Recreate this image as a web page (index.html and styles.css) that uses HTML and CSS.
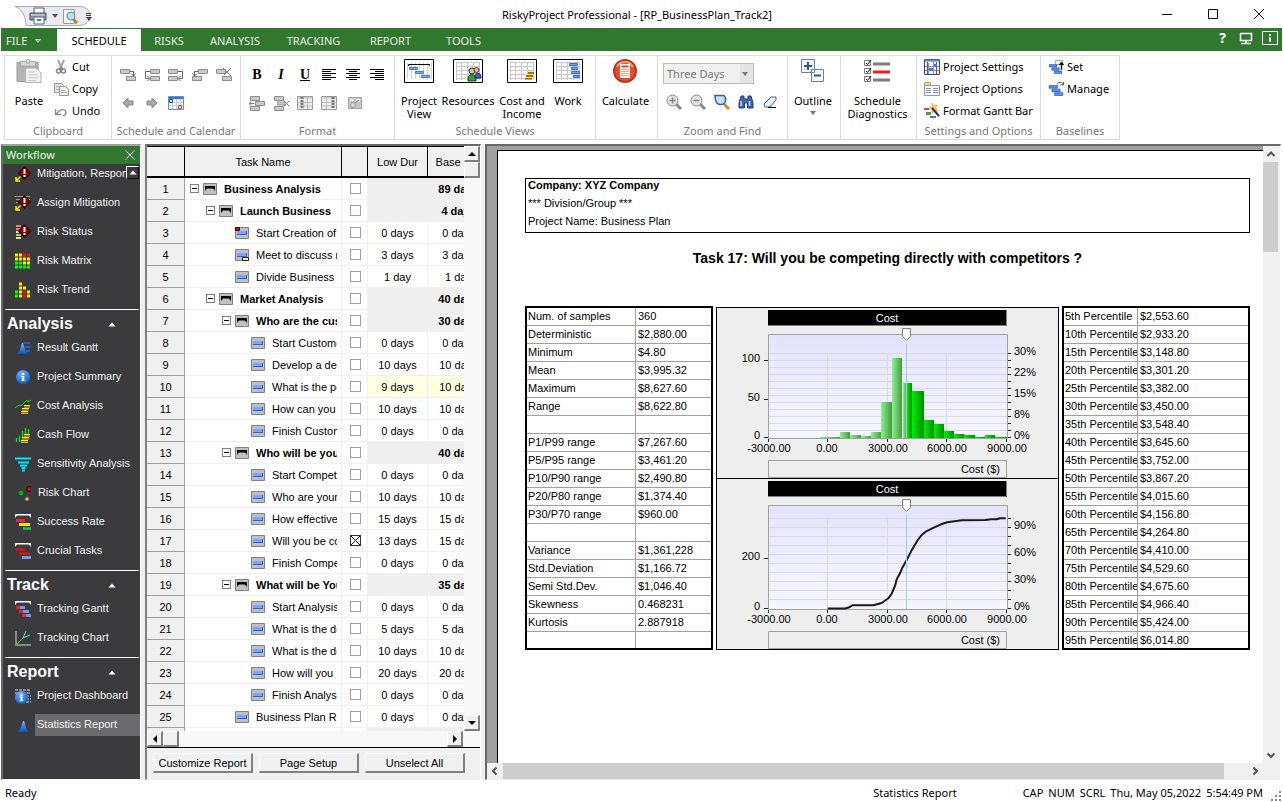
FILE: index.html
```html
<!DOCTYPE html>
<html lang="en">
<head>
<meta charset="utf-8">
<title>RiskyProject Professional - [RP_BusinessPlan_Track2]</title>
<link rel="stylesheet" href="styles.css">
</head>
<body>
<svg class="sprite" aria-hidden="true">
  <defs>
    <linearGradient id="g-blue" x1="0" y1="0" x2="0" y2="1"><stop offset="0" stop-color="#7ab8f5"/><stop offset="1" stop-color="#0b4fc0"/></linearGradient>
    <radialGradient id="g-info" cx=".4" cy=".25" r=".8"><stop offset="0" stop-color="#6fb6ff"/><stop offset="1" stop-color="#0a55c8"/></radialGradient>
    <linearGradient id="g-plot" x1="0" y1="0" x2="0" y2="1"><stop offset="0" stop-color="#e3e3ff"/><stop offset="1" stop-color="#f6f6ff"/></linearGradient>
    <linearGradient id="g-light"><stop offset="0" stop-color="#92f092"/><stop offset="1" stop-color="#3f9c3f"/></linearGradient>
    <linearGradient id="g-dark"><stop offset="0" stop-color="#00f000"/><stop offset="1" stop-color="#008c00"/></linearGradient>
  </defs>
  <symbol id="i-sum" viewBox="0 0 14 12"><path d="M.5.500h13v11H.5z" fill="#c0c0c0" stroke="#808080"/><path d="M2 8V3h10v5l-2-2.500H4z"/></symbol>
  <symbol id="i-task" viewBox="0 0 14 12"><path d="M.5.500h13v11H.5z" fill="#c0c0c0" stroke="#808080"/><path d="M2 4h10v4H2z" fill="#2b62d9"/><path d="M2 4h9v3H2z" fill="#7ba6ff"/></symbol>
  <symbol id="i-start" viewBox="0 0 14 12"><use href="#i-task"/><path d="M.5.500h4v3h-4z" fill="#e00000" stroke="#400"/></symbol>
  <symbol id="i-note" viewBox="0 0 14 12"><use href="#i-task"/><path d="M7.500 8.500h6v3h-6z" fill="#fff0a0" stroke="#222"/></symbol>
  <symbol id="i-diamond" viewBox="0 0 16 16"><path d="M9.500.700 15.800 7l-6.300 6.300L3.200 7z" fill="#8a0000" stroke="#000"/><path d="M8.500 3h2v5h-2zm0 6h2v2h-2z" fill="#fff"/></symbol>
  <symbol id="i-arrow" viewBox="0 0 16 16"><path d="M5.500 10.500 1.500 14.500M1 11v4h4" fill="none" stroke="#ffe800" stroke-width="1.500"/></symbol>
  <symbol id="i-coins" viewBox="0 0 10 10"><path d="M0 7h7v3H0zM1 4h7v3H1zM3 1h6v3H3z" fill="#a87408"/><path d="M0 7h7v1H0zM1 4h7v1H1zM3 1h6v1H3zM0 9h7v.5H0z" fill="#ffe878"/></symbol>
  <symbol id="i-info" viewBox="0 0 16 16"><circle cx="8" cy="8" r="7" fill="url(#g-info)"/><path d="M7 4h2.200v2H7zM6 7h3.200v4H10v1H6v-1h1V8H6z" fill="#fff"/></symbol>
  <symbol id="i-peak" viewBox="0 0 16 16"><path d="M1 14c4-1 4-6 6-11h1c2 5 2 10 6 11z" fill="url(#g-blue)"/></symbol>
  <symbol id="i-up" viewBox="0 0 8 5"><path d="M4 .5 7.500 4.500h-7z" fill="#fff"/></symbol>
  <symbol id="i-bars" viewBox="0 0 16 12"><g stroke="#003c9c" stroke-width=".6" fill="#5b8ff0"><path d="M.5.500h9v3h-9zM3.500 4.500h9v3h-9zM6.500 8.500h9v3h-9z"/></g></symbol>
  <symbol id="i-bracket" viewBox="0 0 16 5"><path d="M0 4V0h16v4l-2-2.500H2z" fill="#fff"/></symbol>
  <symbol id="i-gridbox" viewBox="0 0 30 24"><path d="M.5.500h29v23H.5z" fill="#fff" stroke="#000"/><path d="M3 3.500h24M3 7.500h24M3 11.500h24M3 15.500h24M3 19.500h24M3.500 3v18M8.500 3v18M14.500 3v18M20.500 3v18M26.500 3v18" stroke="#c8c8c8" fill="none"/></symbol>
  <symbol id="i-boxes" viewBox="0 0 10 5"><path d="M.5.500h9v4h-9z" fill="#c9c9c9" stroke="#8e8e8e"/></symbol>
  <symbol id="i-left" viewBox="0 0 16 16"><path d="M3 8l5-5v3h5v4H8v3z" fill="#a8a8a8" stroke="#888"/></symbol>
  <symbol id="i-lens" viewBox="0 0 16 16"><path d="m10 10 5 5" stroke="#888" stroke-width="3"/><circle cx="6.500" cy="6.500" r="5.500" fill="#e2e2e2" stroke="#8c8c8c"/></symbol>
</svg>

<header class="titlebar">
  <svg class="quick" viewBox="2 0 78 24"><path d="M2 4.500h64c8 0 11 5 11 9s-3 10-11 10H13C13 14 8 6 2 4.500z" fill="#e9ebee" stroke="#a8abb0"/>
    <path d="M21 6h10v6H21z" fill="#fff" stroke="#556"/><path d="M17 11h16v7H17z" fill="#8b95a3" stroke="#4c5663"/><path d="M18 13h14" stroke="#dfe6ee"/><path d="M21 15h10v7H21z" fill="#f5f9ff" stroke="#667"/><path d="M24 17h4v2h-4z" fill="#2c83d4"/>
    <path d="M39 12h6l-3 4z" fill="#555"/>
    <path d="M50.500 7.500h11v14h-11z" fill="#fff" stroke="#999"/><path d="m60 17 4 4" stroke="#d07a18" stroke-width="3"/><circle cx="58" cy="14" r="4" fill="#bcdcf5" stroke="#5e87ab"/>
    <path d="M73 11.500h5M73 13.500h5" stroke="#444"/><path d="M73 15h6l-3 4z" fill="#444"/></svg>
  <h1>RiskyProject Professional - [RP_BusinessPlan_Track2]</h1>
  <div class="winbtns">
    <button type="button" aria-label="Minimize"><svg viewBox="0 0 12 12"><path d="M1 6.500h10" stroke="#000"/></svg></button>
    <button type="button" aria-label="Maximize"><svg viewBox="0 0 12 12"><path d="M1.500 1.500h9v9h-9z" fill="none" stroke="#000"/></svg></button>
    <button type="button" aria-label="Close"><svg viewBox="0 0 12 12"><path d="m1 1 10 10M11 1 1 11" stroke="#000"/></svg></button>
  </div>
</header>

<nav class="menubar">
  <button type="button" class="file">FILE <svg viewBox="0 0 6 4" class="tri"><path d="M.5.500h5L3 3.500z" fill="#7fa67c" stroke="#dfeadd" stroke-width=".7"/></svg></button>
  <button type="button" class="w84 on">SCHEDULE</button>
  <button type="button" class="w56">RISKS</button>
  <button type="button" class="w76">ANALYSIS</button>
  <button type="button" class="w80">TRACKING</button>
  <button type="button" class="w72">REPORT</button>
  <button type="button" class="w72">TOOLS</button>
  <div class="menuicons">
    <button type="button" class="help">?</button>
    <button type="button" aria-label="Screen"><svg viewBox="0 0 16 16"><path d="M2.500 3.500h11v7h-11zM8 11v2M3 13.500h10" fill="none" stroke="#fff" stroke-width="1.500"/></svg></button>
    <button type="button" aria-label="About"><svg viewBox="0 0 16 16"><path d="M.5 1.500h15v13H.5z" fill="none" stroke="#fff"/><path d="M7 4h2v2H7zm0 3h2v5H7z" fill="#fff"/></svg></button>
  </div>
</nav>

<section class="ribbon">
  <div class="group g107">
    <div class="body">
      <button type="button" class="big w48"><svg viewBox="0 0 26 25"><path d="M.5 3.500h22v20H.5z" fill="#b5b5b5" stroke="#9a9a9a"/><path d="M4 2.500h16v5H4z" fill="#d8d8d8" stroke="#a0a0a0"/><circle cx="12" cy="2.500" r="2" fill="#eee" stroke="#999"/><path d="M9.500 9.500h11l5 5v10h-16z" fill="#f2f2f2" stroke="#adadad"/><path d="M12 13.500h7M12 16.500h10M12 19.500h10M12 22.500h8" stroke="#c4c4c4"/></svg>Paste</button>
      <div class="list">
        <button type="button"><svg viewBox="0 0 16 16"><path d="m5 1 3 7M11 1 8 8" stroke="#a8a8a8" stroke-width="2"/><path d="m8 8-2 3M8 8l2 3" stroke="#888" stroke-width="2"/><circle cx="5.500" cy="12" r="2" fill="none" stroke="#888" stroke-width="1.500"/><circle cx="10.500" cy="12" r="2" fill="none" stroke="#888" stroke-width="1.500"/></svg>Cut</button>
        <button type="button"><svg viewBox="0 0 16 16"><path d="M1.500 2.500h7l2 2v7h-9z" fill="#e6e6e6" stroke="#999"/><path d="M6.500 5.500h6l3 3v6h-9z" fill="#efefef" stroke="#999"/><path d="M3 5.500h4M3 8.500h3M8 9.500h4M8 11.500h6" stroke="#aaa"/></svg>Copy</button>
        <button type="button"><svg viewBox="0 0 16 16"><path d="M2.500 6v5.500H8M3 11l4-3.500c3-2 6-.5 6 2 0 2-1.500 3-3 3.500" fill="none" stroke="#888" stroke-width="1.300"/></svg>Undo</button>
      </div>
    </div>
    <div class="caption">Clipboard</div>
  </div>

  <div class="group g129">
    <div class="tools">
      <div>
        <button type="button" aria-label="Link"><svg viewBox="0 0 16 16"><use href="#i-boxes" x="0" y="2" width="10" height="5"/><use href="#i-boxes" x="6" y="9" width="10" height="5"/><path d="M10 4.500h3.500V9M11 6.500l2.500 2.500 2-2.500" fill="none" stroke="#666"/></svg></button>
        <button type="button" aria-label="Link start"><svg viewBox="0 0 16 16"><use href="#i-boxes" x="6" y="2" width="10" height="5"/><use href="#i-boxes" x="6" y="9" width="10" height="5"/><path d="M6 4.500H1.500v7H5M3.500 9 6 11.500 3.500 14" fill="none" stroke="#666"/></svg></button>
        <button type="button" aria-label="Link finish"><svg viewBox="0 0 16 16"><use href="#i-boxes" x="0" y="2" width="10" height="5"/><use href="#i-boxes" x="0" y="9" width="10" height="5"/><path d="M10 4.500h4.500v7H11M12.500 9 10 11.500l2.500 2.500" fill="none" stroke="#666"/></svg></button>
        <button type="button" aria-label="Link back"><svg viewBox="0 0 16 16"><use href="#i-boxes" x="6" y="2" width="10" height="5"/><use href="#i-boxes" x="0" y="9" width="10" height="5"/><path d="M6 4.500H2.500V9M.5 6.500 2.500 9 5 6.500" fill="none" stroke="#666"/></svg></button>
        <button type="button" aria-label="Unlink"><svg viewBox="0 0 16 16"><use href="#i-boxes" x="0" y="2" width="10" height="5"/><use href="#i-boxes" x="6" y="9" width="10" height="5"/><path d="m7 1 8 8M15 1 8 8" stroke="#777"/></svg></button>
      </div>
      <div>
        <button type="button" aria-label="Outdent"><svg viewBox="0 0 16 16"><use href="#i-left"/></svg></button>
        <button type="button" aria-label="Indent"><svg viewBox="0 0 16 16"><use href="#i-left" transform="matrix(-1 0 0 1 16 0)"/></svg></button>
        <button type="button" aria-label="Calendar"><svg viewBox="0 0 16 16"><path d="M.5 1.500h15v13H.5z" fill="#fff" stroke="#5b8cd6"/><path d="M1 2h14v2H1z" fill="#3a72cc"/><path d="M1 7.500h14M1 10.500h14M4.500 4v10M8.500 4v10M12.500 4v10" stroke="#b9cdec"/><path d="M1.500 4.500h3v3h-3z" fill="#fff" stroke="#1c4f9e"/><path d="M10.500 10.500h3v3h-3z" fill="#fbd6c4" stroke="#e04a10"/></svg></button>
      </div>
    </div>
    <div class="caption">Schedule and Calendar</div>
  </div>

  <div class="group g154">
    <div class="tools">
      <div>
        <button type="button" class="ser">B</button>
        <button type="button" class="ser it">I</button>
        <button type="button" class="ser un">U</button>
        <button type="button" aria-label="Align left"><svg viewBox="0 0 16 16"><path d="M1 2.500h14M1 4.500h9M1 6.500h14M1 8.500h9M1 10.500h14M1 12.500h9" stroke="#000"/></svg></button>
        <button type="button" aria-label="Center"><svg viewBox="0 0 16 16"><path d="M1 2.500h14M4 4.500h8M1 6.500h14M4 8.500h8M1 10.500h14M4 12.500h8" stroke="#000"/></svg></button>
        <button type="button" aria-label="Align right"><svg viewBox="0 0 16 16"><path d="M1 2.500h14M6 4.500h9M1 6.500h14M6 8.500h9M1 10.500h14M6 12.500h9" stroke="#000"/></svg></button>
      </div>
      <div>
        <button type="button" aria-label="Insert row"><svg viewBox="0 0 16 16"><use href="#i-boxes" x="1" y="1" width="10" height="5"/><use href="#i-boxes" x="6" y="6" width="10" height="5"/><use href="#i-boxes" x="1" y="11" width="10" height="5"/><path d="M0 8.500h5M2.500 6 0 8.500 2.500 11" fill="none" stroke="#777"/></svg></button>
        <button type="button" aria-label="Delete row"><svg viewBox="0 0 16 16"><use href="#i-boxes" x="1" y="1" width="10" height="5"/><use href="#i-boxes" x="4" y="6" width="8" height="5"/><use href="#i-boxes" x="1" y="11" width="10" height="5"/><path d="m11 6 5 5M16 6l-5 5" stroke="#777"/></svg></button>
        <button type="button" aria-label="Insert column"><svg viewBox="0 0 16 16"><path d="M.5 1.500h15v13H.5z" fill="#ededed" stroke="#999"/><path d="M1 3h14M1 7.500h14M1 11h14M10.500 2v12" stroke="#bbb"/><path d="M5 2v12" stroke="#777" stroke-width="3" stroke-dasharray="2 1"/></svg></button>
        <button type="button" aria-label="Delete column"><svg viewBox="0 0 16 16"><path d="M.5 1.500h15v13H.5z" fill="#ededed" stroke="#999"/><path d="M1 3h14M1 7.500h14M1 11h14M5.500 2v12" stroke="#bbb"/><path d="M12 2v12" stroke="#777" stroke-width="3" stroke-dasharray="2 1"/></svg></button>
        <button type="button" class="push" aria-label="Format"><svg viewBox="0 0 16 16"><path d="M1.500 2.500h13v11h-13z" fill="#c6c6c6" stroke="#a5a5a5"/><path d="M3 4h4v2H3zm6 0h4v3H9z" fill="#eee"/><circle cx="6" cy="10" r="2.500" fill="#ddd" stroke="#999"/><path d="m8 8 4-3" stroke="#888"/></svg></button>
      </div>
    </div>
    <div class="caption">Format</div>
  </div>

  <div class="group g201">
    <div class="body tight">
      <button type="button" class="big w46"><svg viewBox="0 0 30 24"><path d="M.5.500h29v23H.5z" fill="#fff" stroke="#000"/><path d="M3.500 4v16M7.500 4v16M11.500 4v16M15.500 4v16M19.500 4v16M23.500 4v16M27.500 4v16" stroke="#d0d0d0"/><path d="M4.500 7V5.500h21V7" fill="none" stroke="#000"/><path d="M5.500 8.500h8v2h-8zM11.500 12.500h8v2h-8zM17.500 16.500h8v2h-8z" fill="#7ba6ff" stroke="#4a78d8"/></svg>Project<br>View</button>
      <button type="button" class="big w52"><svg viewBox="0 0 30 24"><use href="#i-gridbox"/><circle cx="19" cy="12" r="3" fill="#d9c29a" stroke="#432"/><path d="M15 20c0-6 8-6 8 0v2h-8z" fill="#3f9a35" stroke="#153"/><circle cx="23.500" cy="11" r="2.500" fill="#d9c29a" stroke="#432"/><path d="M22 18c0-5 6-5 6 0v1h-6z" fill="#3c63c8" stroke="#124"/></svg>Resources</button>
      <button type="button" class="big w56"><svg viewBox="0 0 30 24"><use href="#i-gridbox"/><use href="#i-coins" x="18" y="11" width="10" height="10"/></svg>Cost and<br>Income</button>
      <button type="button" class="big w36"><svg viewBox="0 0 30 24"><use href="#i-gridbox"/><path d="M16.500 4.500h8v2h-8zM18.500 8.500h6v2h-6zM18.500 12.500h8v2h-8zM20.500 16.500h6v2h-6z" fill="#6ea2f5" stroke="#3a70d0"/></svg>Work</button>
    </div>
    <div class="caption">Schedule Views</div>
  </div>

  <div class="group g62">
    <div class="body mid">
      <button type="button" class="big"><svg viewBox="0 0 24 24"><circle cx="12" cy="12" r="11" fill="#ee4a26" stroke="#b83820" stroke-width="2"/><path d="M4 8a9 9 0 0 1 16 0" fill="none" stroke="#ff9d80" stroke-width="2"/><path d="M7 5h10v14H7z" fill="#fff"/><path d="M8.500 6.500h7v2h-7z" fill="#e8451e"/><path d="M8.500 10.500h7M8.500 12.500h7M8.500 14.500h7M8.500 16.500h7" stroke="#e8451e" stroke-dasharray="1 1"/></svg>Calculate</button>
    </div>
    <div class="caption"></div>
  </div>

  <div class="group g130">
    <div class="tools zoom">
      <select aria-label="Zoom scale" disabled><option>Three Days</option></select>
      <div>
        <button type="button" aria-label="Zoom in"><svg viewBox="0 0 16 16"><use href="#i-lens"/><path d="M6.500 3.500v6M3.500 6.500h6" stroke="#888" stroke-width="1.500"/></svg></button>
        <button type="button" aria-label="Zoom out"><svg viewBox="0 0 16 16"><use href="#i-lens"/><path d="M3.500 6.500h6" stroke="#888" stroke-width="1.500"/></svg></button>
        <button type="button" aria-label="Zoom to fit"><svg viewBox="0 0 16 16"><path d="m10 10 5 5" stroke="#c89020" stroke-width="3"/><path d="M1 1.500h9c3 3 2 9-3.500 9C3 10.500 1 7 1 1.500z" fill="#c2e2f8" stroke="#38639c" stroke-width="1.500"/></svg></button>
        <button type="button" aria-label="Find"><svg viewBox="0 0 16 16"><path d="M3 2h3v3h4V2h3l2 7v5h-5.500V9h-3v5H1V9z" fill="#3b65b5" stroke="#20407c"/><path d="M3 7v5M11.500 7v5" stroke="#c9dcf8" stroke-width="1.500"/></svg></button>
        <button type="button" aria-label="Clear"><svg viewBox="0 0 16 16"><path d="m2 10 7-7h5v3l-6 7H3z" fill="#eaf0fa" stroke="#4a64a0"/><path d="M6 13.500h8" stroke="#000"/></svg></button>
      </div>
    </div>
    <div class="caption">Zoom and Find</div>
  </div>

  <div class="group g53">
    <div class="body mid">
      <button type="button" class="big"><svg viewBox="0 0 24 24"><path d="M.5.500h13v13H.5zM10.500 10.500h12v12h-12z" fill="#f3f7fc" stroke="#6e7f92"/><path d="M7 3v8M3 7h8M13 16.500h7" stroke="#35567e" stroke-width="2"/></svg>Outline<svg viewBox="0 0 6 4" class="tri"><path d="M0 0h6L3 4z" fill="#777"/></svg></button>
    </div>
    <div class="caption"></div>
  </div>

  <div class="group g76">
    <div class="body mid">
      <button type="button" class="big"><svg viewBox="0 0 26 24"><path d="M.5 1.500h6v5h-6zM.5 9.500h6v5h-6zM.5 17.500h6v5h-6z" fill="#fff" stroke="#777"/><path d="m2 4 1.500 1.500L7 1M2 12l1.500 1.500L7 9M2 20l1.500 1.500L7 17" fill="none" stroke="#111"/><path d="M9 5h17M9 21h17" stroke="#7d7d7d" stroke-width="3"/><path d="M9 13h17" stroke="#ee1c24" stroke-width="3"/></svg>Schedule<br>Diagnostics</button>
    </div>
    <div class="caption"></div>
  </div>

  <div class="group g124">
    <div class="body side">
      <div class="list">
        <button type="button"><svg viewBox="0 0 16 16"><path d="M.5.500h15v15H.5z" fill="#eef4ff" stroke="#274a86"/><path d="M1 1.500h14" stroke="#5f86c4" stroke-width="2"/><path d="M1 7.500h14M1 11.500h14M4.500 4v11M9.500 1v14" stroke="#7b96c8"/><path d="M3.500 3v12M12.500 3v12" stroke="#e02020"/><path d="M5 9h4v3H5zM10 5h3v3h-3z" fill="#4377d8"/></svg>Project Settings</button>
        <button type="button"><svg viewBox="0 0 16 16"><path d="M.5 4.500h15v10H.5z" fill="#fafafa" stroke="#8d99a8"/><path d="M.5 4V1.500h6V4" fill="#f6d88a" stroke="#c9a24d"/><path d="M2 7.500h5M2 9.500h5M2 11.500h5M9 7.500h5M9 9.500h5M9 11.500h5" stroke="#7a8fd0"/></svg>Project Options</button>
        <button type="button"><svg viewBox="0 0 16 16"><path d="M0 5h5v2H0z" fill="#d8492b"/><path d="M2 9h5v3H2z" fill="#4f9a44"/><path d="M6 13h6v2H6z" fill="#3f75d8"/><path d="m8 0 1.500 3L13 2l-1.500 3L14 8l-3.500-.5L8 10V6.500L5 5l3-1z" fill="#ffd34e" stroke="#d99a10" stroke-width=".6"/><path d="m8 5 7 8" stroke="#203a70" stroke-width="2"/></svg>Format Gantt Bar</button>
      </div>
    </div>
    <div class="caption">Settings and Options</div>
  </div>

  <div class="group g79">
    <div class="body side">
      <div class="list">
        <button type="button"><svg viewBox="0 0 16 16"><path d="M7.500 1.500h7v4h-7z" fill="#eef5ec" stroke="#9cb59a"/><use href="#i-bars" x="0" y="5" width="15" height="10"/><path d="M13.500 11V4M11.500 6l2-2.500 2 2.500" fill="none" stroke="#000" stroke-width="1.300"/></svg>Set</button>
        <button type="button"><svg viewBox="0 0 16 16"><use href="#i-bars" x="0" y="4" width="16" height="11"/><path d="M9 3.500c1-3 5-3 6 0M15.500 1v3h-3" fill="none" stroke="#557"/></svg>Manage</button>
      </div>
    </div>
    <div class="caption">Baselines</div>
  </div>
</section>

<main class="work">
  <aside class="flow">
    <div class="flowhead"><h2>Workflow</h2><button type="button" aria-label="Close"><svg viewBox="0 0 10 10"><path d="m.5.500 9 9M9.500.500l-9 9" stroke="#fff"/></svg></button></div>
    <div class="flowbody">
      <ul>
        <li><a href="#"><svg viewBox="0 0 16 16"><use href="#i-diamond"/><use href="#i-arrow"/></svg><span>Mitigation, Respons</span></a></li>
        <li><a href="#"><svg viewBox="0 0 16 16"><path d="M0 1.500h15M1 4.500h14M1 7.500h13" stroke="#999"/><use href="#i-diamond"/><use href="#i-arrow"/></svg><span>Assign Mitigation</span></a></li>
        <li><a href="#"><svg viewBox="0 0 16 16"><path d="M1 2h5M1 5h5" stroke="#f08080" stroke-width="2"/><path d="M1 8h5M1 14h5" stroke="#ffe87a" stroke-width="2"/><path d="M1 11h5" stroke="#7be08a" stroke-width="2"/><use href="#i-diamond"/></svg><span>Risk Status</span></a></li>
        <li><a href="#"><svg viewBox="0 0 16 16"><path d="M0 2h3M4 2h3M0 6h3M4 6h3M8 6h3M12 6h3M8 10h3M12 10h3" stroke="#ffe800" stroke-width="3"/><path d="M8 2h3M12 2h3" stroke="#e81818" stroke-width="3"/><path d="M0 10h3M4 10h3M0 14h15" stroke="#0f0" stroke-width="3" stroke-dasharray="3 1"/></svg><span>Risk Matrix</span></a></li>
        <li><a href="#"><svg viewBox="0 0 16 16"><path d="M4 2h3M4 6h3M8 6h3M4 10h3M12 10h3" stroke="#ffe800" stroke-width="3"/><path d="M8 10h3M8 14h3" stroke="#e81818" stroke-width="3"/><path d="M0 10h3M0 14h3" stroke="#0f0" stroke-width="3"/><path d="M4 14h3M12 14h3" stroke="#ffe800" stroke-width="3"/></svg><span>Risk Trend</span></a></li>
      </ul>
      <h3>Analysis<svg viewBox="0 0 8 5"><use href="#i-up"/></svg></h3>
      <ul>
        <li><a href="#"><svg viewBox="0 0 16 16"><path d="M8 2h7v2H9zM10 6h6v2h-6zM11 10h4v2h-4z" fill="#2c5cc0"/><use href="#i-peak"/></svg><span>Result Gantt</span></a></li>
        <li><a href="#"><svg viewBox="0 0 16 16"><use href="#i-info"/></svg><span>Project Summary</span></a></li>
        <li><a href="#"><svg viewBox="0 0 16 16"><path d="m0 10 4-3 2 1 6-6 1 2 3-2" fill="none" stroke="#0e0"/><use href="#i-coins" x="6" y="6" width="10" height="10"/></svg><span>Cost Analysis</span></a></li>
        <li><a href="#"><svg viewBox="0 0 16 16"><path d="M1.500 15v-4M4.500 15V9M7.500 15V4M10.500 8V1M13.500 8V2" stroke="#0e0" stroke-width="1.200"/><use href="#i-coins" x="6" y="6" width="10" height="10"/></svg><span>Cash Flow</span></a></li>
        <li><a href="#"><svg viewBox="0 0 16 16"><path d="M0 2.500h16M3 6.500h11M5 9.500h7M6.500 12h4M7 14.500h3" stroke="#00e5ff" stroke-width="2.200"/></svg><span>Sensitivity Analysis</span></a></li>
        <li><a href="#"><svg viewBox="0 0 16 16"><circle cx="6" cy="8" r="3" fill="#16a516" stroke="#052"/><circle cx="14" cy="4" r="2.500" fill="#c01010" stroke="#400"/><circle cx="12" cy="14" r="2" fill="#e0d060" stroke="#663"/></svg><span>&hairsp;Risk Chart</span></a></li>
        <li><a href="#"><svg viewBox="0 0 16 16"><use href="#i-bracket" width="16" height="5"/><path d="M1 6.500h9" stroke="#f02040" stroke-width="3"/><path d="M4 10.500h11" stroke="#f8e000" stroke-width="3"/><path d="M8 14.500h8" stroke="#10d040" stroke-width="2.500"/></svg><span>Success Rate</span></a></li>
        <li><a href="#"><svg viewBox="0 0 16 16"><use href="#i-bracket" width="16" height="5"/><path d="M1 6.500h9M4 10.500h11" stroke="#e01010" stroke-width="2.500"/><path d="M7 14.500h9" stroke="#6a9af5" stroke-width="3"/></svg><span>Crucial Tasks</span></a></li>
      </ul>
      <h3>Track<svg viewBox="0 0 8 5"><use href="#i-up"/></svg></h3>
      <ul>
        <li><a href="#"><svg viewBox="0 0 16 16"><use href="#i-bracket" width="16" height="5"/><path d="M1 6.500h4M4 10.500h4M7 14.500h4" stroke="#f02020" stroke-width="3"/><path d="M5 6.500h5M8 10.500h6M11 14.500h5" stroke="#6a9af5" stroke-width="3"/></svg><span>Tracking Gantt</span></a></li>
        <li><a href="#"><svg viewBox="0 0 16 16"><path d="M1 1v14h15" fill="none" stroke="#888" stroke-width="2"/><path d="m2 14 6-6 3-7M8 8l7-3" fill="none" stroke="#5ce0e8"/><path d="m2 14 5-5" stroke="#1c1"/></svg><span>Tracking Chart</span></a></li>
      </ul>
      <h3>Report<svg viewBox="0 0 8 5"><use href="#i-up"/></svg></h3>
      <ul>
        <li><a href="#"><svg viewBox="0 0 16 16"><path d="M0 2h16M0 5h16M11 8h5M11 11h5M11 14h5" stroke="#8a8a8a" stroke-width="2" stroke-dasharray="3 1"/><use href="#i-info" x="-1" y="2" width="15" height="15"/></svg><span>Project Dashboard</span></a></li>
        <li><a href="#" class="sel"><svg viewBox="0 0 16 16"><use href="#i-peak" x="1" y="1"/></svg><span>Statistics Report</span></a></li>
      </ul>
      <button type="button" class="scrollup" aria-label="Scroll up"><svg viewBox="0 0 8 5"><use href="#i-up"/></svg></button>
    </div>
  </aside>

  <section class="gridpane">
    <div class="gridtop">
      <div class="gridclip">
        <table class="tasks">
          <colgroup><col class="c1"><col class="c2"><col class="c3"><col class="c4"><col class="c5"></colgroup>
          <thead><tr><th></th><th>Task Name</th><th></th><th>Low Dur</th><th>Base Dur</th></tr></thead>
          <tbody>
            <tr class="s l0"><th>1</th><td><div><button type="button" aria-label="Collapse"></button><svg><use href="#i-sum"/></svg><span>Business Analysis</span></div></td><td><input type="checkbox" aria-label="Task 1"></td><td></td><td>89 days</td></tr>
            <tr class="s l1"><th>2</th><td><div><button type="button" aria-label="Collapse"></button><svg><use href="#i-sum"/></svg><span>Launch Business</span></div></td><td><input type="checkbox" aria-label="Task 2"></td><td></td><td>4 days</td></tr>
            <tr class="l2"><th>3</th><td><div><svg><use href="#i-start"/></svg><span>Start Creation of</span></div></td><td><input type="checkbox" aria-label="Task 3"></td><td>0 days</td><td>0 days</td></tr>
            <tr class="l2"><th>4</th><td><div><svg><use href="#i-note"/></svg><span>Meet to discuss roles</span></div></td><td><input type="checkbox" aria-label="Task 4"></td><td>3 days</td><td>3 days</td></tr>
            <tr class="l2"><th>5</th><td><div><svg><use href="#i-task"/></svg><span>Divide Business Plan</span></div></td><td><input type="checkbox" aria-label="Task 5"></td><td>1 day</td><td>1 day</td></tr>
            <tr class="s l1"><th>6</th><td><div><button type="button" aria-label="Collapse"></button><svg><use href="#i-sum"/></svg><span>Market Analysis</span></div></td><td><input type="checkbox" aria-label="Task 6"></td><td></td><td>40 days</td></tr>
            <tr class="s l2"><th>7</th><td><div><button type="button" aria-label="Collapse"></button><svg><use href="#i-sum"/></svg><span>Who are the customers</span></div></td><td><input type="checkbox" aria-label="Task 7"></td><td></td><td>30 days</td></tr>
            <tr class="l3"><th>8</th><td><div><svg><use href="#i-task"/></svg><span>Start Customer</span></div></td><td><input type="checkbox" aria-label="Task 8"></td><td>0 days</td><td>0 days</td></tr>
            <tr class="l3"><th>9</th><td><div><svg><use href="#i-task"/></svg><span>Develop a description</span></div></td><td><input type="checkbox" aria-label="Task 9"></td><td>10 days</td><td>10 days</td></tr>
            <tr class="l3 hot"><th>10</th><td><div><svg><use href="#i-task"/></svg><span>What is the potential</span></div></td><td><input type="checkbox" aria-label="Task 10"></td><td>9 days</td><td>10 days</td></tr>
            <tr class="l3"><th>11</th><td><div><svg><use href="#i-task"/></svg><span>How can you reach</span></div></td><td><input type="checkbox" aria-label="Task 11"></td><td>10 days</td><td>10 days</td></tr>
            <tr class="l3"><th>12</th><td><div><svg><use href="#i-task"/></svg><span>Finish Customer</span></div></td><td><input type="checkbox" aria-label="Task 12"></td><td>0 days</td><td>0 days</td></tr>
            <tr class="s l2"><th>13</th><td><div><button type="button" aria-label="Collapse"></button><svg><use href="#i-sum"/></svg><span>Who will be your</span></div></td><td><input type="checkbox" aria-label="Task 13"></td><td></td><td>40 days</td></tr>
            <tr class="l3"><th>14</th><td><div><svg><use href="#i-task"/></svg><span>Start Competitive</span></div></td><td><input type="checkbox" aria-label="Task 14"></td><td>0 days</td><td>0 days</td></tr>
            <tr class="l3"><th>15</th><td><div><svg><use href="#i-task"/></svg><span>Who are your</span></div></td><td><input type="checkbox" aria-label="Task 15"></td><td>10 days</td><td>10 days</td></tr>
            <tr class="l3"><th>16</th><td><div><svg><use href="#i-task"/></svg><span>How effective</span></div></td><td><input type="checkbox" aria-label="Task 16"></td><td>15 days</td><td>15 days</td></tr>
            <tr class="l3"><th>17</th><td><div><svg><use href="#i-task"/></svg><span>Will you be competing</span></div></td><td><input type="checkbox" checked aria-label="Task 17"></td><td>13 days</td><td>15 days</td></tr>
            <tr class="l3"><th>18</th><td><div><svg><use href="#i-task"/></svg><span>Finish Competitive</span></div></td><td><input type="checkbox" aria-label="Task 18"></td><td>0 days</td><td>0 days</td></tr>
            <tr class="s l2"><th>19</th><td><div><button type="button" aria-label="Collapse"></button><svg><use href="#i-sum"/></svg><span>What will be Your</span></div></td><td><input type="checkbox" aria-label="Task 19"></td><td></td><td>35 days</td></tr>
            <tr class="l3"><th>20</th><td><div><svg><use href="#i-task"/></svg><span>Start Analysis</span></div></td><td><input type="checkbox" aria-label="Task 20"></td><td>0 days</td><td>0 days</td></tr>
            <tr class="l3"><th>21</th><td><div><svg><use href="#i-task"/></svg><span>What is the demand</span></div></td><td><input type="checkbox" aria-label="Task 21"></td><td>5 days</td><td>5 days</td></tr>
            <tr class="l3"><th>22</th><td><div><svg><use href="#i-task"/></svg><span>What is the demand</span></div></td><td><input type="checkbox" aria-label="Task 22"></td><td>10 days</td><td>10 days</td></tr>
            <tr class="l3"><th>23</th><td><div><svg><use href="#i-task"/></svg><span>How will you</span></div></td><td><input type="checkbox" aria-label="Task 23"></td><td>20 days</td><td>20 days</td></tr>
            <tr class="l3"><th>24</th><td><div><svg><use href="#i-task"/></svg><span>Finish Analysis</span></div></td><td><input type="checkbox" aria-label="Task 24"></td><td>0 days</td><td>0 days</td></tr>
            <tr class="l2"><th>25</th><td><div><svg><use href="#i-task"/></svg><span>Business Plan Review</span></div></td><td><input type="checkbox" aria-label="Task 25"></td><td>0 days</td><td>0 days</td></tr>
            <tr class="s l0"><th></th><td></td><td></td><td></td><td></td></tr>
          </tbody>
        </table>
      </div>
      <div class="vbar"><button type="button" aria-label="Up"><svg viewBox="0 0 8 8"><path d="m4 2 4 4H0z"/></svg></button><i></i><b></b><button type="button" aria-label="Down"><svg viewBox="0 0 8 8"><path d="m4 6 4-4H0z"/></svg></button></div>
    </div>
    <div class="hbar"><button type="button" aria-label="Left"><svg viewBox="0 0 8 8"><path d="m2 4 4-4v8z"/></svg></button><i></i><b></b><button type="button" aria-label="Right"><svg viewBox="0 0 8 8"><path d="m6 4-4-4v8z"/></svg></button></div>
    <div class="actions"><button type="button">Customize Report</button><button type="button">Page Setup</button><button type="button">Unselect All</button></div>
  </section>

  <section class="report">
    <div class="paper">
      <div class="company"><p><strong>Company: XYZ Company</strong></p><p>*** Division/Group ***</p><p>Project Name: Business Plan</p></div>
      <h2>Task 17: Will you be competing directly with competitors ?</h2>
      <div class="cols">
        <table class="stats first">
          <colgroup><col class="k"><col></colgroup>
          <tr><td>Num. of samples</td><td>360</td></tr><tr><td>Deterministic</td><td>$2,880.00</td></tr><tr><td>Minimum</td><td>$4.80</td></tr><tr><td>Mean</td><td>$3,995.32</td></tr><tr><td>Maximum</td><td>$8,627.60</td></tr><tr><td>Range</td><td>$8,622.80</td></tr><tr><td></td><td></td></tr>
          <tr><td>P1/P99 range</td><td>$7,267.60</td></tr><tr><td>P5/P95 range</td><td>$3,461.20</td></tr><tr><td>P10/P90 range</td><td>$2,490.80</td></tr><tr><td>P20/P80 range</td><td>$1,374.40</td></tr><tr><td>P30/P70 range</td><td>$960.00</td></tr><tr><td></td><td></td></tr>
          <tr><td>Variance</td><td>$1,361,228</td></tr><tr><td>Std.Deviation</td><td>$1,166.72</td></tr><tr><td>Semi Std.Dev.</td><td>$1,046.40</td></tr><tr><td>Skewness</td><td>0.468231</td></tr><tr><td>Kurtosis</td><td>2.887918</td></tr><tr><td></td><td></td></tr>
        </table>
        <div class="charts">
          <svg viewBox="0 0 341 170">
            <path d="M51 2h239v16H51z" fill="#000"/><path d="M51 17.500h238.500V2" fill="none" stroke="#808080"/><text x="170" y="14" text-anchor="middle" class="inv">Cost</text>
            <path d="M51.500 26.500h239v104h-239z" fill="url(#g-plot)" stroke="#a0a0a0"/>
            <path d="M52 45.500h238M52 52.500h238M52 59.500h238M52 66.500h238M52 73.500h238M52 80.500h238M52 87.500h238M52 94.500h238M52 101.500h238M52 108.500h238M52 115.500h238M52 122.500h238M110.500 45v85M170.500 45v85M229.500 45v85" stroke="#dcdcdc"/>
            <g fill="url(#g-light)"><rect x="103" y="129" width="20" height="1"/><rect x="123" y="124" width="10" height="6"/><rect x="133" y="127" width="11" height="3"/><rect x="144" y="128" width="10" height="2"/><rect x="154" y="124" width="11" height="6"/><rect x="164" y="94" width="11" height="36"/><rect x="175" y="50" width="10" height="80"/><rect x="186" y="75" width="4" height="55"/></g>
            <g fill="url(#g-dark)"><rect x="190" y="75" width="5" height="55"/><rect x="195" y="83" width="12" height="47"/><rect x="207" y="112" width="10" height="18"/><rect x="217" y="116" width="10" height="14"/><rect x="227" y="123" width="10" height="7"/><rect x="237" y="126" width="10" height="4"/><rect x="247" y="127" width="11" height="3"/><rect x="258" y="129" width="10" height="1"/><rect x="268" y="127" width="10" height="3"/><rect x="278" y="129" width="12" height="1"/></g>
            <path d="M189.500 36v94" stroke="#a5cbe2"/><path d="M185.500 20.500h8v8l-4 4-4-4z" fill="#fff" stroke="#808080"/>
            <path d="M291 45.500h3M291 52.500h3M291 59.500h3M291 66.500h3M291 73.500h3M291 80.500h3M291 87.500h3M291 94.500h3M291 101.500h3M291 108.500h3M291 115.500h3M291 122.500h3M291 129.500h3M47 52.500h4M47 91.500h4M47 129.500h4M51.500 131v3M110.500 131v3M170.500 131v3M229.500 131v3M289.500 131v3" stroke="#222"/>
            <text x="43" y="54" text-anchor="end">100</text><text x="43" y="93" text-anchor="end">50</text><text x="43" y="131" text-anchor="end">0</text>
            <text x="297" y="47">30%</text><text x="297" y="68">22%</text><text x="297" y="89">15%</text><text x="297" y="110">8%</text><text x="297" y="131">0%</text>
            <g text-anchor="middle"><text x="52" y="144">-3000.00</text><text x="110" y="144">0.00</text><text x="171" y="144">3000.00</text><text x="230" y="144">6000.00</text><text x="290" y="144">9000.00</text></g>
            <path d="M51.500 152.500h238v17h-238z" fill="none" stroke="#a0a0a0"/><text x="283" y="165" text-anchor="end">Cost ($)</text>
          </svg>
          <svg viewBox="0 0 341 170">
            <path d="M51 2h239v16H51z" fill="#000"/><path d="M51 17.500h238.500V2" fill="none" stroke="#808080"/><text x="170" y="14" text-anchor="middle" class="inv">Cost</text>
            <path d="M51.500 26.500h239v104h-239z" fill="url(#g-plot)" stroke="#a0a0a0"/>
            <path d="M52 39.500h238M52 48.500h238M52 57.500h238M52 66.500h238M52 75.500h238M52 84.500h238M52 93.500h238M52 102.500h238M52 111.500h238M52 120.500h238M110.500 39v91M170.500 39v91M229.500 39v91" stroke="#dcdcdc"/>
            <path d="M110.700 129.500H128l5-1.500 2.300-1.700h21l8.400-2.300 6.600-4.700 3.400-4.600 3.600-8.700 1.400-5.700 3.600-6.600 2-5 4-7 5.400-10.400 5.600-9.600 4.400-5.700 4-3.300 6-3 10-4.700 5.600-1.700 14.400-2 23.300-.3 6.700-.7h5l3.300-1h5.700" fill="none" stroke="#1a1a1a" stroke-width="2" stroke-linejoin="round"/>
            <path d="M189.500 36v94" stroke="#a5cbe2"/><path d="M185.500 20.500h8v8l-4 4-4-4z" fill="#fff" stroke="#808080"/>
            <path d="M291 39.500h3M291 48.500h3M291 57.500h3M291 66.500h3M291 75.500h3M291 84.500h3M291 93.500h3M291 102.500h3M291 111.500h3M291 120.500h3M291 129.500h3M47 79.500h4M47 129.500h4M51.500 131v3M110.500 131v3M170.500 131v3M229.500 131v3M289.500 131v3" stroke="#222"/>
            <text x="43" y="81" text-anchor="end">200</text><text x="43" y="131" text-anchor="end">0</text>
            <text x="297" y="50">90%</text><text x="297" y="77">60%</text><text x="297" y="104">30%</text><text x="297" y="131">0%</text>
            <g text-anchor="middle"><text x="52" y="144">-3000.00</text><text x="110" y="144">0.00</text><text x="171" y="144">3000.00</text><text x="230" y="144">6000.00</text><text x="290" y="144">9000.00</text></g>
            <path d="M51.500 152.500h238v17h-238z" fill="none" stroke="#a0a0a0"/><text x="283" y="165" text-anchor="end">Cost ($)</text>
          </svg>
        </div>
        <table class="stats second">
          <colgroup><col class="k"><col></colgroup>
          <tr><td>5th Percentile</td><td>$2,553.60</td></tr><tr><td>10th Percentile</td><td>$2,933.20</td></tr><tr><td>15th Percentile</td><td>$3,148.80</td></tr><tr><td>20th Percentile</td><td>$3,301.20</td></tr><tr><td>25th Percentile</td><td>$3,382.00</td></tr><tr><td>30th Percentile</td><td>$3,450.00</td></tr><tr><td>35th Percentile</td><td>$3,548.40</td></tr><tr><td>40th Percentile</td><td>$3,645.60</td></tr><tr><td>45th Percentile</td><td>$3,752.00</td></tr><tr><td>50th Percentile</td><td>$3,867.20</td></tr><tr><td>55th Percentile</td><td>$4,015.60</td></tr><tr><td>60th Percentile</td><td>$4,156.80</td></tr><tr><td>65th Percentile</td><td>$4,264.80</td></tr><tr><td>70th Percentile</td><td>$4,410.00</td></tr><tr><td>75th Percentile</td><td>$4,529.60</td></tr><tr><td>80th Percentile</td><td>$4,675.60</td></tr><tr><td>85th Percentile</td><td>$4,966.40</td></tr><tr><td>90th Percentile</td><td>$5,424.00</td></tr><tr><td>95th Percentile</td><td>$6,014.80</td></tr>
        </table>
      </div>
    </div>
    <div class="rv"><svg viewBox="0 0 16 16"><path d="m4.500 10 3.500-3.500 3.500 3.500" /></svg><i></i><b></b><svg viewBox="0 0 16 16"><path d="m4.500 6.500 3.500 3.500 3.500-3.500"/></svg></div>
    <div class="rh"><svg viewBox="0 0 16 16"><path d="m9.500 4.500-3.500 3.500 3.500 3.500"/></svg><i></i><b></b><svg viewBox="0 0 16 16"><path d="m6.500 4.500 3.500 3.500-3.500 3.500"/></svg></div>
  </section>
</main>

<footer class="status">
  <span>Ready</span><span class="doc">Statistics Report</span><span class="keys"><span>CAP</span><span>NUM</span><span>SCRL</span><span>Thu, May 05,2022</span></span><span>5:54:49 PM</span>
  <svg viewBox="0 0 12 12"><path d="M9 1h2v2H9zM5 5h2v2H5zM9 5h2v2H9zM1 9h2v2H1zM5 9h2v2H5zM9 9h2v2H9z" fill="#888"/></svg>
</footer>
</body>
</html>
```

FILE: styles.css
```css
* { box-sizing: border-box; }
body {
  margin: 0;
  height: 100vh;
  display: flex;
  flex-direction: column;
  overflow: hidden;
  background: #fff;
  color: #000;
  font: 11px/14px "Noto Sans", sans-serif;
}
button { border: 0; padding: 0; margin: 0; background: none; font: inherit; color: inherit; }
h1, h2, h3, p, ul { margin: 0; padding: 0; font-size: inherit; font-weight: normal; list-style: none; }
svg { display: block; flex: none; }
.sprite { position: absolute; width: 0; height: 0; }

/* title bar */
.titlebar { flex: none; height: 28px; display: grid; grid-template-columns: 1fr auto 1fr; align-items: center; padding: 0 18px 0 15px; }
.titlebar h1 { font-size: 11px; padding: 2px 6px 0 0; }
.quick { width: 78px; height: 24px; }
.winbtns { display: flex; justify-content: flex-end; gap: 34px; }
.winbtns svg { width: 12px; height: 12px; }

/* menu bar */
.menubar { flex: none; height: 23px; margin: 0 1px; padding-top: 1px; display: flex; background: #317730; color: #e6f0e4; }
.menubar > button { height: 22px; padding-top: 2px; }
.menubar .file { width: 56px; padding-left: 5px; display: flex; align-items: center; gap: 8px; }
.tri { width: 6px; height: 4px; }
.menubar .on { background: #fff; color: #000; }
.w36 { width: 36px; }
.w46 { width: 46px; }
.w48 { width: 48px; }
.w52 { width: 52px; }
.w56 { width: 56px; }
.w72 { width: 73px; }
.w76 { width: 76px; }
.w80 { width: 81px; }
.w84 { width: 84px; }
.menuicons { margin-left: auto; padding-right: 4px; display: flex; align-items: center; gap: 8px; padding-bottom: 4px; }
.menuicons svg { width: 16px; height: 16px; }
.help { width: 15px; font-size: 14px; font-weight: bold; color: #fff; }

/* ribbon */
.ribbon { flex: none; margin: 4px 0 4px 4px; display: flex; }
.group { flex: none; height: 85px; border: 1px solid #dcdcdc; border-left-width: 0; display: flex; flex-direction: column; }
.group:first-child { border-left-width: 1px; }
.g107 { width: 108px; }
.g129 { width: 129px; }
.g154 { width: 154px; }
.g201 { width: 201px; }
.g62 { width: 62px; }
.g130 { width: 130px; }
.g53 { width: 53px; }
.g76 { width: 76px; }
.g124 { width: 124px; }
.g79 { width: 79px; }
.body { height: 66px; display: flex; align-items: flex-start; }
.body.mid { justify-content: center; padding-right: 2px; }
.body.tight { padding-left: 1px; }
.body.side { padding-left: 7px; }
.caption { height: 17px; line-height: 18px; text-align: center; color: #787878; white-space: nowrap; }
.big { display: flex; flex-direction: column; align-items: center; line-height: 13px; padding-top: 3px; text-align: center; }
.big > svg:first-child { width: 30px; height: 24px; margin-bottom: 11px; }
.big .tri { margin-top: 4px; }
.list button { display: flex; align-items: center; height: 22px; gap: 3px; white-space: nowrap; }
.list svg { width: 16px; height: 16px; }
.tools { height: 66px; padding: 5px 0 5px 4px; display: flex; flex-direction: column; }
.tools div { display: flex; }
.tools button { width: 24px; height: 28px; display: grid; place-items: center; }
.tools svg { width: 16px; height: 16px; }
.tools .push { width: 28px; }
.zoom select { appearance: none; width: 91px; height: 21px; margin: 2px 0 4px 1px; padding: 0 0 0 3px; border: 1px solid #b9bcc2; border-radius: 0; color: #787878; opacity: 1; font: inherit;
  background: linear-gradient(#e4e4e4, #e4e4e4) no-repeat right / 13px 100%, #f0f0f0; }
.zoom { position: relative; }
.zoom::after { content: ""; position: absolute; left: 84px; top: 16px; border: 3px solid transparent; border-top: 4px solid #777; border-bottom-width: 0; }
.ser { font: bold 14px "Liberation Serif", serif; }
.it { font-style: italic; }
.un { text-decoration: underline; }

/* work area */
.work { flex: 1; min-height: 0; display: flex; gap: 4px; margin: 0 2px 0 1px; background: #f0f0f0; font-family: "Liberation Sans", sans-serif; }
.flow { flex: none; width: 140px; border: 1px solid #a0a0a0; border-width: 2px 1px 1px 2px; border-color: #a0a0a0 #fff #fff #696969; background: #3b3b3d; display: flex; flex-direction: column; color: #f2f2f2; }
.flowhead { flex: none; height: 18px; background: #317730; display: flex; align-items: center; justify-content: space-between; padding: 0 5px 0 3px; font-family: "Noto Sans", sans-serif; }
.flowhead svg { width: 10px; height: 10px; }
.flowbody { position: relative; flex: 1; min-height: 0; overflow: hidden; }
.flowbody > ul:first-child { margin-top: -5px; }
.flowbody li a { display: flex; align-items: center; gap: 4px; height: 29px; padding-left: 12px; color: inherit; text-decoration: none; white-space: nowrap; }
.flowbody li svg { width: 16px; height: 16px; }
.flowbody li span { flex: 1; height: 22px; line-height: 21px; padding-left: 2px; overflow: hidden; }
.sel span { background: #6b6b6d; }
.flowbody h3 { height: 24px; margin: 5px 1px 0 2px; border-top: 1px solid #fff; display: grid; grid-template-columns: 101px 8px; align-items: center; padding: 5px 0 0 2px; font: bold 16px/18px "Liberation Sans", sans-serif; color: #fff; }
.flowbody h3 svg, .scrollup svg { width: 8px; height: 5px; }
.scrollup { position: absolute; right: 1px; top: 2px; width: 13px; height: 13px; background: #3b3b3d; border: 1px solid; border-color: #fff #111 #111 #fff; display: grid; place-items: center; }

.gridpane { flex: none; width: 336px; border: solid; border-width: 2px 1px 1px 2px; border-color: #696969 #fff #f0f0f0 #808080; display: flex; flex-direction: column; background: #f0f0f0; }
.gridtop { flex: 1; min-height: 0; display: flex; }
.gridclip { flex: 1; min-width: 0; overflow: hidden; background: #fff; }
.tasks { table-layout: fixed; width: 343px; border-collapse: separate; border-spacing: 0; }
.c1 { width: 38px; }
.c2 { width: 157px; }
.c3 { width: 26px; }
.c4 { width: 60px; }
.c5 { width: 62px; }
.tasks th, .tasks td { padding: 0; font-weight: normal; text-align: center; height: 22px; white-space: nowrap; }
.tasks thead th { height: 32px; background: #f0f0f0; border: solid #000; border-width: 1px 1px 2px 0; }
.tasks tbody th { background: #f0f0f0; border: solid #a0a0a0; border-width: 0 1px 1px 0; }
.tasks td { border: solid #f0f0f0; border-width: 0 1px 1px 0; }
.tasks td div { display: flex; align-items: center; overflow: hidden; margin-right: 4px; }
.tasks td svg { width: 14px; height: 12px; }
.tasks td span { padding-left: 7px; }
.tasks td button { flex: none; width: 9px; height: 9px; margin: 0 4px 0 -13px; border: 1px solid #808080; background: linear-gradient(#000, #000) no-repeat center / 5px 1px; }
.l0 div { padding-left: 18px; }
.l1 div { padding-left: 34px; }
.l2 div { padding-left: 50px; }
.l3 div { padding-left: 66px; }
.s td { font-weight: bold; }
.s td:nth-child(n+4) { background: #efefef; }
.hot td:nth-child(n+4) { background: #ffffe1; }
.tasks td:nth-child(3) { padding-left: 2px; }
.tasks input { appearance: none; display: block; width: 11px; height: 11px; margin: 0 auto; border: 1px solid #a0a0a0; background: #fff; }
.tasks input:checked { border-color: #333; background: linear-gradient(45deg, transparent 46%, #222 46% 54%, transparent 54%), linear-gradient(-45deg, transparent 46%, #222 46% 54%, transparent 54%); }
.vbar, .hbar { flex: none; display: flex; background: #f8f8f8; }
.vbar { width: 16px; flex-direction: column; }
.hbar { height: 17px; padding-right: 17px; border-bottom: 1px solid #000; }
.vbar b, .hbar b { flex: 1; }
.vbar i, .hbar i, .vbar button, .hbar button { flex: none; width: 16px; height: 16px; background: #f0f0f0; border: solid; border-width: 1px 2px 2px 1px; border-color: #fff #808080 #808080 #fff; display: grid; place-items: center; }
.vbar svg, .hbar svg { width: 8px; height: 8px; }
.actions { flex: none; height: 31px; padding: 5px 5px 5px 6px; display: flex; gap: 6px; }
.actions button { width: 100px; height: 20px; border: solid; border-width: 1px 2px 2px 1px; border-color: #fff #808080 #808080 #fff; }

/* report viewer */
.report { flex: 1; min-width: 0; border: solid; border-width: 2px 1px 1px 2px; border-color: #696969 #fff #f0f0f0 #696969; display: grid; grid-template: minmax(0, 1fr) 16px / minmax(0, 1fr) 17px; background: #a0a0a0; }
.paper { margin: 4px 0 0 10px; background: #fff; border: solid #000; border-width: 1px 0 0 1px; padding: 27px 13px 0 27px; overflow: hidden; }
.company { border: 1px solid #000; padding: 0 2px; height: 55px; }
.company p { height: 18px; line-height: 13px; }
.paper h2 { font: bold 14px/18px "Liberation Sans", sans-serif; text-align: center; margin: 16px 0 39px; }
.cols { display: grid; grid-template-columns: 188fr 343fr 188fr; gap: 3px; align-items: start; }
.stats { table-layout: fixed; width: 100%; border: 2px solid #000; border-collapse: separate; border-spacing: 0; }
.stats td { height: 18px; padding: 0 0 1px 2px; line-height: 14px; border: solid #a0a0a0; border-width: 0 1px 1px 0; white-space: nowrap; overflow: hidden; }
.stats td:first-child { padding-left: 1px; }
.stats td:last-child { border-right-width: 0; }
.stats tr:last-child td { height: 16px; border-bottom-width: 0; }
.first .k { width: 109px; }
.second .k { width: 74px; }
.charts { margin-top: 1px; border: 1px solid #000; background: #eee; }
.charts svg { width: 100%; height: auto; font: 11px "Liberation Sans", sans-serif; }
.charts svg + svg { border-top: 1px solid #000; }
.inv { fill: #fff; }
.rv, .rh { display: flex; background: #f0f0f0; }
.rv { flex-direction: column; }
.rh { grid-column: 1 / 3; padding-right: 17px; }
.rv b { flex: 1; }
.rv i { width: 15px; height: 90px; background: #cdcdcd; }
.rh i { flex: 1; background: #cdcdcd; }
.rh b { width: 23px; }
.rv svg, .rh svg { width: 16px; height: 16px; fill: none; stroke: #555; stroke-width: 2; }

/* status bar */
.status { flex: none; height: 22px; display: flex; align-items: center; padding: 3px 1px 0 5px; }
.doc { margin-left: auto; margin-right: 66px; }
.keys { display: flex; gap: 5px; margin-right: 5px; }
.status svg { width: 12px; height: 12px; margin-left: 7px; align-self: flex-end; }
```
